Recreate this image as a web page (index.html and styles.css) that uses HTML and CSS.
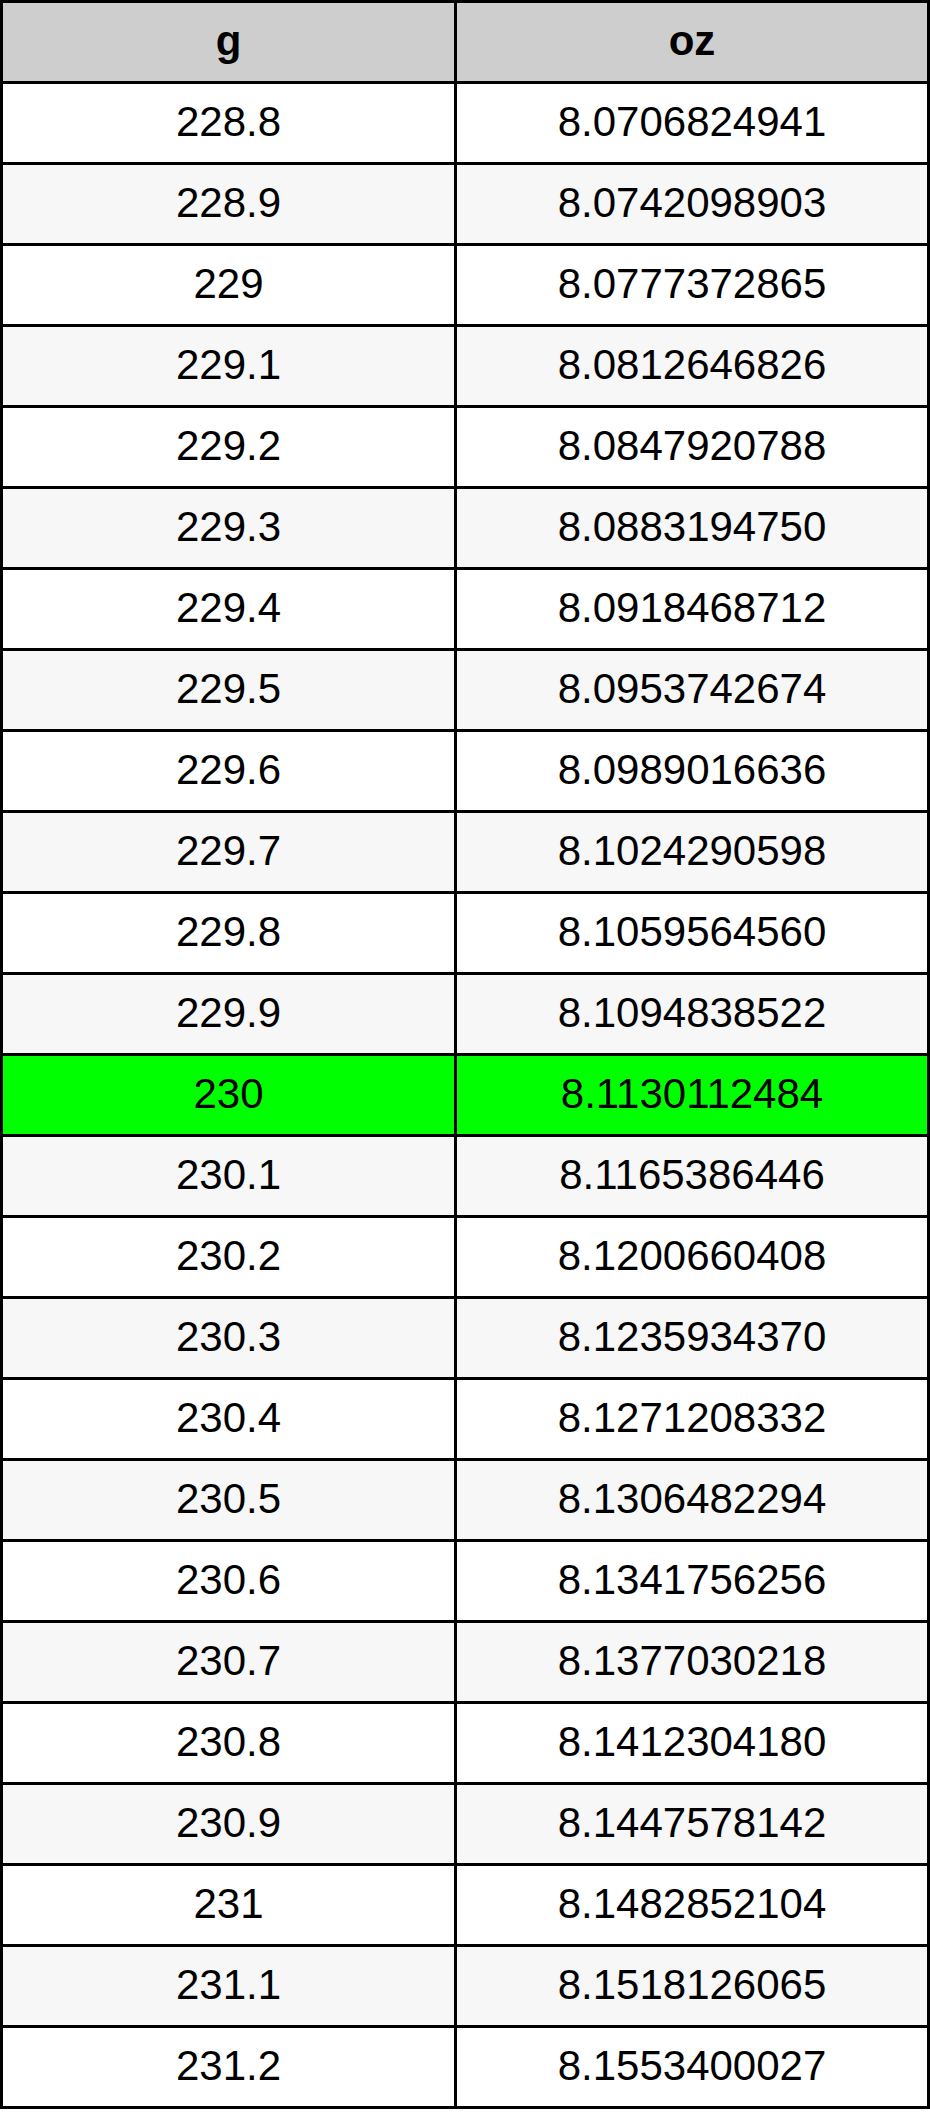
FILE: index.html
```html
<!DOCTYPE html>
<html>
<head>
<meta charset="utf-8">
<title>g to oz</title>
<link rel="stylesheet" href="styles.css">
</head>
<body>
<table class="conv">
<thead>
<tr><th class="c1">g</th><th class="c2">oz</th></tr>
</thead>
<tbody>
<tr><td>228.8</td><td>8.0706824941</td></tr>
<tr><td>228.9</td><td>8.0742098903</td></tr>
<tr><td>229</td><td>8.0777372865</td></tr>
<tr><td>229.1</td><td>8.0812646826</td></tr>
<tr><td>229.2</td><td>8.0847920788</td></tr>
<tr><td>229.3</td><td>8.0883194750</td></tr>
<tr><td>229.4</td><td>8.0918468712</td></tr>
<tr><td>229.5</td><td>8.0953742674</td></tr>
<tr><td>229.6</td><td>8.0989016636</td></tr>
<tr><td>229.7</td><td>8.1024290598</td></tr>
<tr><td>229.8</td><td>8.1059564560</td></tr>
<tr><td>229.9</td><td>8.1094838522</td></tr>
<tr class="hl"><td>230</td><td>8.1130112484</td></tr>
<tr><td>230.1</td><td>8.1165386446</td></tr>
<tr><td>230.2</td><td>8.1200660408</td></tr>
<tr><td>230.3</td><td>8.1235934370</td></tr>
<tr><td>230.4</td><td>8.1271208332</td></tr>
<tr><td>230.5</td><td>8.1306482294</td></tr>
<tr><td>230.6</td><td>8.1341756256</td></tr>
<tr><td>230.7</td><td>8.1377030218</td></tr>
<tr><td>230.8</td><td>8.1412304180</td></tr>
<tr><td>230.9</td><td>8.1447578142</td></tr>
<tr><td>231</td><td>8.1482852104</td></tr>
<tr><td>231.1</td><td>8.1518126065</td></tr>
<tr><td>231.2</td><td>8.1553400027</td></tr>
</tbody>
</table>
</body>
</html>
```
FILE: styles.css
```css
html, body {
  margin: 0;
  padding: 0;
  background: #ffffff;
}
.conv {
  border-collapse: separate;
  border-spacing: 0;
  border-top: 3px solid #000;
  border-left: 3px solid #000;
  table-layout: fixed;
  width: 930px;
  font-family: "Liberation Sans", Arial, sans-serif;
  font-size: 42px;
  color: #000;
}
.conv th, .conv td {
  height: 78px;
  padding: 0 0 2px 0;
  text-align: center;
  vertical-align: middle;
  border-right: 3px solid #000;
  border-bottom: 3px solid #000;
  box-sizing: border-box;
  line-height: 1;
}
.conv th, .conv td { height: 81px; }
.conv .c1 { width: 454px; }
.conv .c2 { width: 473px; }
.conv th {
  background: #cecece;
  font-weight: bold;
}
.conv tbody tr:nth-child(odd) td { background: #ffffff; }
.conv tbody tr:nth-child(even) td { background: #f7f7f7; }
.conv tbody tr.hl td { background: #00ff00; }
```
